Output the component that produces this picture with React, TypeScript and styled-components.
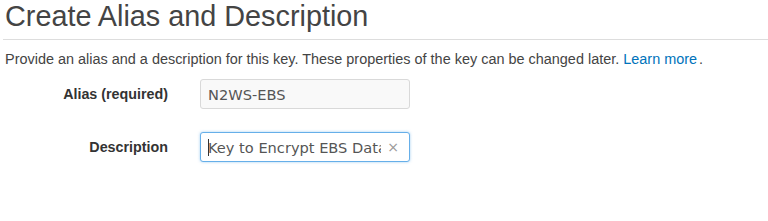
import styled, { createGlobalStyle } from "styled-components";

const GlobalStyle = createGlobalStyle`
    body {
        margin: 0;
        background: #ffffff;
        font-family: "Liberation Sans", Arial, sans-serif;
    }
`;

const Page = styled.div`
    width: 768px;
    height: 221px;
    overflow: hidden;
`;

const Header = styled.div`
    margin-left: 3px;
    padding: 0 0 7px 2px;
    border-bottom: 1px solid #dddddd;
`;

const Title = styled.h2`
    margin: 0;
    font-size: 28.8px;
    line-height: 32px;
    font-weight: normal;
    color: #444444;
`;

const Intro = styled.p`
    margin: 10px 0 0 5px;
    font-size: 14.45px;
    line-height: 18px;
    color: #444444;
`;

const Link = styled.a`
    color: #0073bb;
    text-decoration: none;
    margin: 0 2px 0 4px;
`;

const Form = styled.div`
    display: grid;
    grid-template-columns: 168px 210px;
    column-gap: 32px;
    row-gap: 23px;
    align-items: center;
    margin-top: 11px;
`;

const Label = styled.label`
    text-align: right;
    font-size: 14.3px;
    font-weight: bold;
    color: #333333;
`;

const Field = styled.div<{ $focused?: boolean }>`
    display: flex;
    align-items: center;
    box-sizing: border-box;
    height: 30px;
    padding: 0 10px 0 7px;
    border-radius: 3px;
    border: 1px solid ${(p) => (p.$focused ? "#66afe9" : "#d9d9d9")};
    background: ${(p) => (p.$focused ? "#ffffff" : "#f9f9f9")};
    box-shadow: ${(p) => (p.$focused ? "0 0 3px rgba(102, 175, 233, 0.6)" : "none")};
    font-family: "DejaVu Sans", Verdana, sans-serif;
    font-size: 14.6px;
    color: #555555;
`;

const Value = styled.span`
    flex: 1;
    white-space: nowrap;
    overflow: hidden;
`;

const Caret = styled.span`
    display: inline-block;
    width: 1px;
    height: 17px;
    margin-right: -1px;
    background: #333333;
    vertical-align: -3px;
`;

const Clear = styled.span`
    margin-left: 6px;
    color: #999999;
    font-size: 14px;
`;

export default function App() {
    return (
        <Page>
            <GlobalStyle />
            <Header>
                <Title>Create Alias and Description</Title>
            </Header>
            <Intro>
                Provide an alias and a description for this key. These properties of the key can be changed later.
                <Link href="#">Learn more</Link>.
            </Intro>
            <Form>
                <Label>Alias (required)</Label>
                <Field>
                    <Value>N2WS-EBS</Value>
                </Field>
                <Label>Description</Label>
                <Field $focused>
                    <Value>
                        <Caret />
                        Key to Encrypt EBS Data Volumes
                    </Value>
                    <Clear>×</Clear>
                </Field>
            </Form>
        </Page>
    );
}
